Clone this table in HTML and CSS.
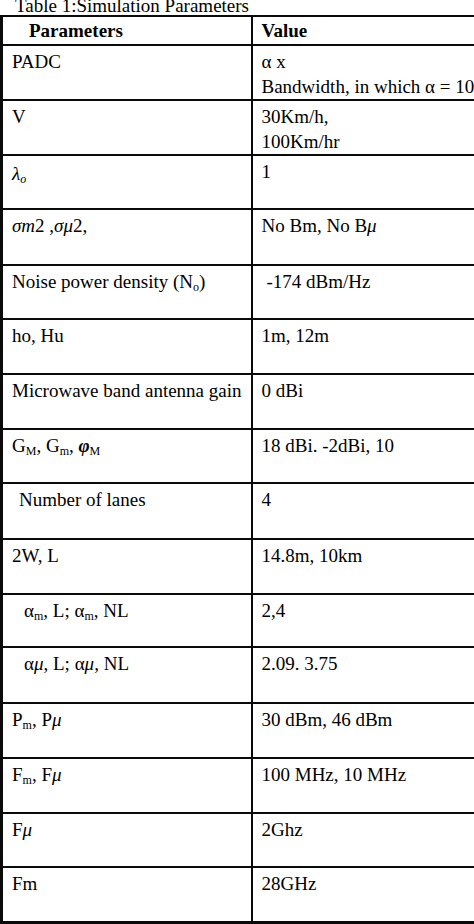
FILE: index.html
```html
<!DOCTYPE html>
<html>
<head>
<meta charset="utf-8">
<title>Simulation Parameters</title>
<link rel="stylesheet" href="styles.css">
</head>
<body>
<div class="page">
  <div class="caption">Table 1:Simulation Parameters</div>
  <table class="params">
    <colgroup><col class="c1"><col class="c2"></colgroup>
    <thead>
      <tr class="head">
        <th class="h-param">Parameters</th>
        <th>Value</th>
      </tr>
    </thead>
    <tbody>
      <tr class="r53"><td>PADC</td><td>α x<br>Bandwidth, in which α = 10</td></tr>
      <tr class="r55"><td>V</td><td>30Km/h,<br>100Km/hr</td></tr>
      <tr class="r54"><td class="shift3"><i>λ<sub>o</sub></i></td><td>1</td></tr>
      <tr class="r56"><td><i>σm</i>2 ,<i>σμ</i>2,</td><td>No Bm, No B<i>μ</i></td></tr>
      <tr class="r54"><td>Noise power density (N<sub>o</sub>)</td><td class="ind5">-174 dBm/Hz</td></tr>
      <tr class="r55"><td>ho, Hu</td><td>1m, 12m</td></tr>
      <tr class="r55"><td>Microwave band antenna gain</td><td>0 dBi</td></tr>
      <tr class="r54"><td>G<sub>M</sub>, G<sub>m</sub>, <b><i>φ</i></b><sub>M</sub></td><td>18 dBi. -2dBi, 10</td></tr>
      <tr class="r56"><td class="ind7">Number of lanes</td><td>4</td></tr>
      <tr class="r55"><td>2W, L</td><td>14.8m, 10km</td></tr>
      <tr class="r53"><td class="ind12">α<sub>m</sub>, L; α<sub>m</sub>, NL</td><td>2,4</td></tr>
      <tr class="r56"><td class="ind12">α<i>μ</i>, L; α<i>μ</i>, NL</td><td>2.09. 3.75</td></tr>
      <tr class="r55"><td>P<sub>m</sub>, P<i>μ</i></td><td>30 dBm, 46 dBm</td></tr>
      <tr class="r55"><td>F<sub>m</sub>, F<i>μ</i></td><td>100 MHz, 10 MHz</td></tr>
      <tr class="r54"><td>F<i>μ</i></td><td>2Ghz</td></tr>
      <tr class="r55"><td>Fm</td><td>28GHz</td></tr>
    </tbody>
  </table>
</div>
</body>
</html>
```
FILE: styles.css
```css
html, body {
  margin: 0;
  padding: 0;
  background: #fff;
}

body {
  overflow: hidden;
  font-family: "Liberation Serif", "Times New Roman", serif;
  font-size: 19px;
  color: #000;
}

.page {
  width: 474px;
  height: 924px;
  overflow: hidden;
}

.caption {
  padding-left: 15px;
  line-height: 11px;
  height: 11px;
  margin-bottom: 4px;
  white-space: nowrap;
}

.params {
  border-collapse: collapse;
  table-layout: fixed;
  width: 530px;
}

.c1 { width: 250px; }
.c2 { width: 280px; }

.params th,
.params td {
  border: 2px solid #0a0a0a;
  padding: 3px 9px 0 9px;
  vertical-align: top;
  text-align: left;
  line-height: 25px;
  white-space: nowrap;
  font-weight: normal;
}

.params th:first-child,
.params td:first-child {
  border-left: 3px solid #0a0a0a;
}

.params tr:last-child td {
  border-bottom-width: 3px;
}

.params th {
  font-weight: bold;
  padding-top: 1px;
}

.params .h-param { padding-left: 26px; }

.head { height: 29px; }
.r53 { height: 53px; }
.r54 { height: 54px; }
.r55 { height: 55px; }
.r56 { height: 56px; }

.ind5 { padding-left: 14px !important; }
.ind7 { padding-left: 16px !important; }
.ind12 { padding-left: 21px !important; }
.shift3 { padding-top: 5px !important; }

sub {
  font-size: 12px;
  vertical-align: -3px;
  line-height: 0;
}

i { font-style: italic; }
```
